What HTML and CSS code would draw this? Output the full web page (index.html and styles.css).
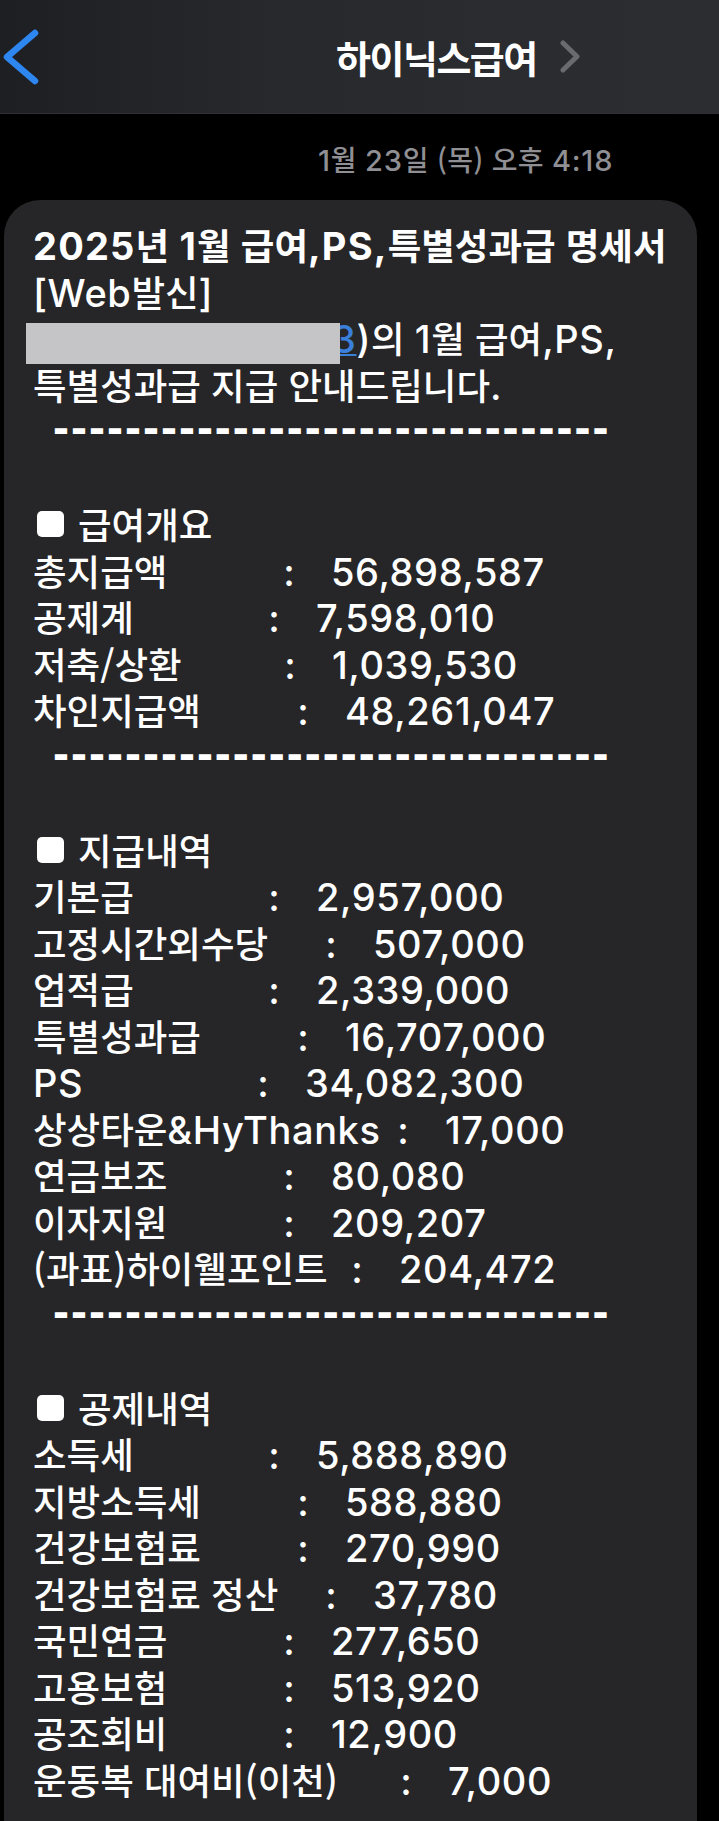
FILE: index.html
```html
<!DOCTYPE html>
<html lang="ko">
<head>
<meta charset="utf-8">
<title>하이닉스급여</title>
<link rel="stylesheet" href="styles.css">
</head>
<body>
<div class="screen">
  <header class="nav">
    <svg class="back" width="40" height="56" viewBox="0 0 40 56" aria-hidden="true">
      <path d="M35 4 L7 28 L35 52" fill="none" stroke="#2e86f0" stroke-width="6.5" stroke-linecap="round" stroke-linejoin="round"/>
    </svg>
    <span class="title">하이닉스급여</span>
    <svg class="chev" width="22" height="34" viewBox="0 0 22 34" aria-hidden="true">
      <path d="M4 3 L18 16.5 L4 30" fill="none" stroke="#6a6b6e" stroke-width="5" stroke-linecap="round" stroke-linejoin="round"/>
    </svg>
  </header>

  <div class="date"><span class="dn">1</span>월 <span class="dn">23</span>일 (목) 오후 <span class="dn">4:18</span></div>

  <div class="bubble">
    <div class="line bold"><span class="n">2025</span>년 <span class="n">1</span>월 급여<span class="n">,PS,</span>특별성과급 명세서</div>
    <div class="line"><span class="n">[Web</span>발신<span class="n">]</span></div>
    <div class="line"><span class="redact"></span><span class="n link">3</span><span class="n">)</span>의 <span class="n">1</span>월 급여<span class="n">,PS,</span></div>
    <div class="line">특별성과급 지급 안내드립니다<span class="n">.</span></div>
    <div class="dash">-------------------------------</div>
    <div class="line"></div>

    <div class="line head"><span class="sq"></span>급여개요</div>
    <div class="line"><span class="k w248">총지급액</span><span class="n sep">:</span><span class="n v">56,898,587</span></div>
    <div class="line"><span class="k w233">공제계</span><span class="n sep">:</span><span class="n v">7,598,010</span></div>
    <div class="line"><span class="k w249">저축/상환</span><span class="n sep">:</span><span class="n v">1,039,530</span></div>
    <div class="line"><span class="k w262">차인지급액</span><span class="n sep">:</span><span class="n v">48,261,047</span></div>
    <div class="dash">-------------------------------</div>
    <div class="line"></div>

    <div class="line head"><span class="sq"></span>지급내역</div>
    <div class="line"><span class="k w233">기본급</span><span class="n sep">:</span><span class="n v">2,957,000</span></div>
    <div class="line"><span class="k w290">고정시간외수당</span><span class="n sep">:</span><span class="n v">507,000</span></div>
    <div class="line"><span class="k w233">업적급</span><span class="n sep">:</span><span class="n v">2,339,000</span></div>
    <div class="line"><span class="k w262">특별성과급</span><span class="n sep">:</span><span class="n v">16,707,000</span></div>
    <div class="line"><span class="k w222"><span class="n">PS</span></span><span class="n sep">:</span><span class="n v">34,082,300</span></div>
    <div class="line"><span class="k w362">상상타운<span class="n">&amp;HyThanks</span></span><span class="n sep">:</span><span class="n v">17,000</span></div>
    <div class="line"><span class="k w248">연금보조</span><span class="n sep">:</span><span class="n v">80,080</span></div>
    <div class="line"><span class="k w248">이자지원</span><span class="n sep">:</span><span class="n v">209,207</span></div>
    <div class="line"><span class="k w316">(과표)하이웰포인트</span><span class="n sep">:</span><span class="n v">204,472</span></div>
    <div class="dash">-------------------------------</div>
    <div class="line"></div>

    <div class="line head"><span class="sq"></span>공제내역</div>
    <div class="line"><span class="k w233">소득세</span><span class="n sep">:</span><span class="n v">5,888,890</span></div>
    <div class="line"><span class="k w262">지방소득세</span><span class="n sep">:</span><span class="n v">588,880</span></div>
    <div class="line"><span class="k w262">건강보험료</span><span class="n sep">:</span><span class="n v">270,990</span></div>
    <div class="line"><span class="k w290">건강보험료 정산</span><span class="n sep">:</span><span class="n v">37,780</span></div>
    <div class="line"><span class="k w248">국민연금</span><span class="n sep">:</span><span class="n v">277,650</span></div>
    <div class="line"><span class="k w248">고용보험</span><span class="n sep">:</span><span class="n v">513,920</span></div>
    <div class="line"><span class="k w248">공조회비</span><span class="n sep">:</span><span class="n v">12,900</span></div>
    <div class="line"><span class="k w365">운동복 대여비(이천)</span><span class="n sep">:</span><span class="n v">7,000</span></div>
    <div class="line"></div>
  </div>
</div>
</body>
</html>
```

FILE: styles.css
```css
html, body {
  margin: 0;
  padding: 0;
  background: #000;
}
body {
  width: 719px;
  height: 1821px;
  overflow: hidden;
  font-family: "Noto Sans CJK KR", "Noto Sans", sans-serif;
  color: #fff;
}
.screen {
  width: 719px;
}

/* navigation bar */
.nav {
  height: 114px;
  display: flex;
  align-items: center;
  background: linear-gradient(90deg, #1d1f22 0%, #26282b 35%, #2b2c2f 70%, #2c2d30 100%);
  border-bottom: 1px solid #303134;
  box-sizing: border-box;
}
.back {
  display: block;
  flex: none;
}
.title {
  margin-left: 296px;
  font-size: 38px;
  font-weight: 700;
  letter-spacing: -1.5px;
  line-height: 1;
  color: #fff;
}
.chev {
  display: block;
  flex: none;
  margin-left: 22px;
}

/* timestamp */
.date {
  margin-top: 30px;
  padding-left: 318px;
  height: 30px;
  line-height: 30px;
  font-size: 28px;
  font-weight: 500;
  letter-spacing: 0.3px;
  color: #8f8f94;
  white-space: nowrap;
}
.dn {
  font-family: "Inter", "Noto Sans", sans-serif;
  font-size: 29px;
  letter-spacing: 0.8px;
  line-height: 1;
}

/* message bubble */
.bubble {
  margin-top: 26px;
  margin-left: 4px;
  width: 693px;
  min-height: 1700px;
  box-sizing: border-box;
  padding: 22px 12px 0 29px;
  background: #262628;
  border-radius: 36px 36px 0 0;
}
.line {
  height: 46.5px;
  line-height: 46.5px;
  font-size: 36.5px;
  font-weight: 500;
  white-space: nowrap;
}
.bold {
  font-weight: 700;
}
.n {
  font-family: "Inter", "Noto Sans", sans-serif;
  font-size: 38px;
  font-weight: 500;
  letter-spacing: 0.6px;
  line-height: 1;
}
.bold .n {
  font-weight: 700;
  letter-spacing: 1.2px;
}
.redact {
  display: inline-block;
  position: relative;
  z-index: 1;
  width: 314px;
  height: 41px;
  margin-left: -7px;
  vertical-align: -11px;
  background: #c5c5c7;
}
.link {
  color: #3a7fd9;
  text-decoration: underline;
  text-decoration-thickness: 2px;
  margin-left: -8px;
}

.dash {
  height: 46.5px;
  box-sizing: border-box;
  padding-bottom: 6px;
  padding-left: 20px;
  line-height: 40px;
  font-family: "Liberation Sans", Arial, sans-serif;
  font-weight: 700;
  font-size: 48px;
  letter-spacing: 2px;
  white-space: nowrap;
}

.head {
  display: flex;
  align-items: center;
}
.sq {
  display: block;
  width: 27px;
  height: 26px;
  border-radius: 5px;
  background: #fff;
  margin-left: 4px;
  margin-right: 14px;
  flex: none;
}

.k {
  display: inline-block;
}
.w222 { width: 222px; }
.w233 { width: 233px; }
.w248 { width: 248px; }
.w249 { width: 249px; }
.w262 { width: 262px; }
.w290 { width: 290px; }
.w316 { width: 316px; }
.w362 { width: 362px; }
.w365 { width: 365px; }

.sep {
  display: inline-block;
  width: 16px;
  text-align: center;
  letter-spacing: 0;
}
.v {
  margin-left: 34px;
}
```
